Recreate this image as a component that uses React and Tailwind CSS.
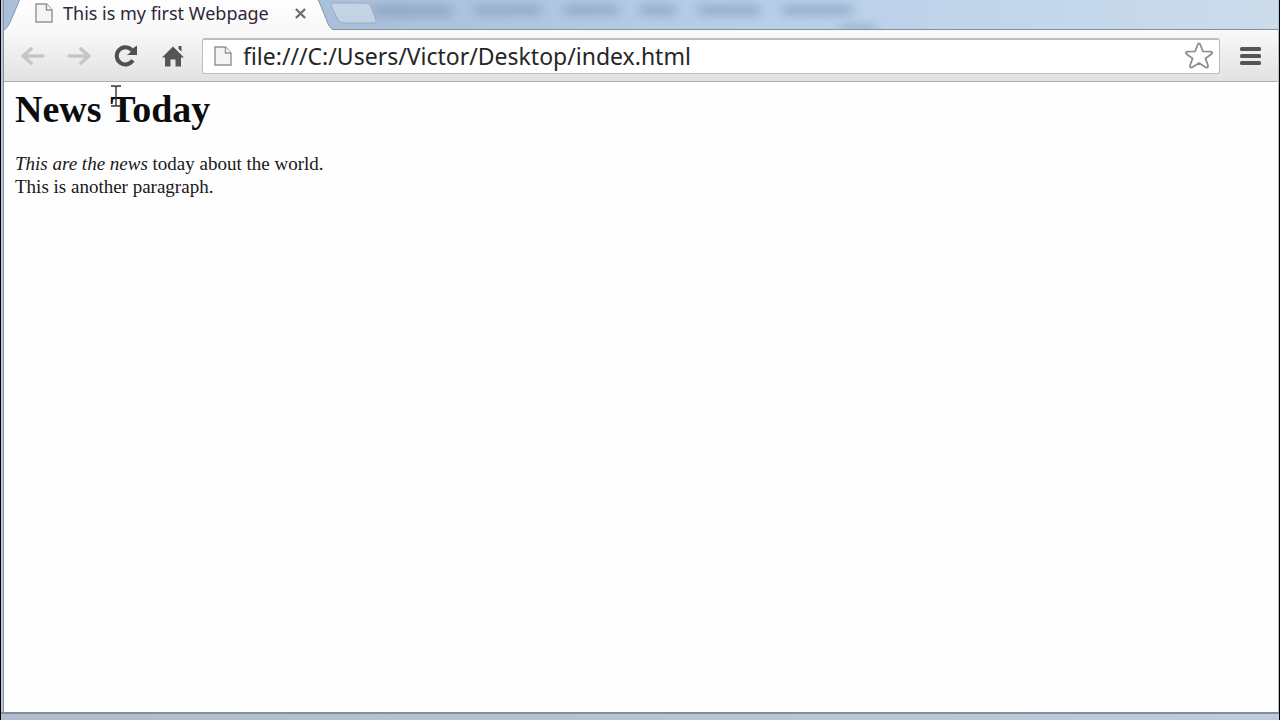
import React from 'react';

const glassSmudges = [
  { x: 368, y: 4, w: 80, h: 14 },
  { x: 470, y: 4, w: 68, h: 12 },
  { x: 560, y: 4, w: 54, h: 12 },
  { x: 636, y: 4, w: 36, h: 12 },
  { x: 694, y: 4, w: 62, h: 12 },
  { x: 778, y: 4, w: 70, h: 12 },
  { x: 836, y: 24, w: 36, h: 8 },
];

const PageIcon = () => (
  <svg width="18" height="20" viewBox="0 0 18 20" className="shrink-0" fill="#f4f4f4" stroke="#929292" strokeWidth="1.4">
    <path d="M1 1H11.5L17 7V19H1Z" />
    <path d="M11.5 1V7H17" fill="#fff" />
  </svg>
);

const ArrowIcon = ({ flip }) => (
  <svg width="26" height="20" viewBox="0 0 26 20" className={flip ? '-scale-x-100' : ''} fill="none" stroke="#c6c6c6" strokeWidth="3.6" strokeLinecap="round" strokeLinejoin="round">
    <path d="M3 10H23M11 3L3 10L11 17" />
  </svg>
);

const ReloadIcon = () => (
  <svg width="26" height="24" viewBox="0 0 26 24">
    <path d="M20.8 16.2A8.6 8.6 0 1 1 19.5 5.8" fill="none" stroke="#505050" strokeWidth="4" />
    <path d="M25 1.5V11H14.5Q19 9 19 5.5Z" fill="#505050" />
  </svg>
);

const HomeIcon = () => (
  <svg width="28" height="24" viewBox="-3 0 28 24" fill="#555">
    <path d="M12 2.5L1 13.5H4V22.5H9.5V15.5H14.5V22.5H20V13.5H23Z" />
    <path d="M17.5 2H20.5V7.5L17.5 5Z" />
  </svg>
);

const StarIcon = () => (
  <svg width="30" height="28" viewBox="0 0 30 28" fill="#fff" stroke="#8f8f8f" strokeWidth="1.8" strokeLinejoin="round">
    <path d="M15 1.5Q16 1.5 16.5 3L18.8 9.3L26.6 9.6Q29.2 10.2 27.5 12L21.4 16.4L24 23.5Q24.2 26 22 25.4L15 21L8 25.4Q5.8 26 6 23.5L8.6 16.4L2.5 12Q.8 10.2 3.4 9.6L11.2 9.3L13.5 3Q14 1.5 15 1.5Z" />
  </svg>
);

const MenuIcon = () => (
  <svg width="22" height="20" viewBox="0 0 22 20" fill="#555">
    <rect x="0" y="1" width="21" height="4" rx="1.5" />
    <rect x="0" y="8" width="21" height="4" rx="1.5" />
    <rect x="0" y="15" width="21" height="4" rx="1.5" />
  </svg>
);

const TabStrip = () => (
  <header className="relative flex h-[30px] overflow-hidden bg-linear-to-r from-[#aabfd9] from-25% via-[#b8cfea] via-60% to-[#cddceb]">
    {/* window glass with whatever shows through it */}
    <svg className="absolute inset-0 h-full w-full" aria-hidden="true">
      <defs>
        <filter id="glass" x="-20%" y="-100%" width="140%" height="300%">
          <feGaussianBlur stdDeviation="6 4" />
        </filter>
        <linearGradient id="tab" x1="0" y1="0" x2="0" y2="1">
          <stop offset="0" stopColor="#fefefe" />
          <stop offset="1" stopColor="#f8f8f8" />
        </linearGradient>
      </defs>
      {glassSmudges.map((s) => (
        <rect key={s.x} x={s.x} y={s.y} width={s.w} height={s.h} fill="#869dbf" opacity="0.6" filter="url(#glass)" />
      ))}
      <line x1="328" y1="29.5" x2="100%" y2="29.5" stroke="#84909f" />
      <path d="M-1 31C3 28 5 25 7 20L16 -1H314L323 21C325 27 328 30 332 31Z" fill="url(#tab)" stroke="#8494ab" />
      <path d="M328 3H362Q366 3 367 6L372 20Q373 23 370 23H340Q336 23 334 20L327 6Z" fill="#c3d2e4" stroke="#98aac2" />
    </svg>
    <div className="relative flex h-[26px] w-[326px] items-center pl-[31px]">
      <PageIcon />
      <span className="ml-[10px] grow whitespace-nowrap text-[18px] leading-6 text-[#302638]">This is my first Webpage</span>
      <button type="button" aria-label="Close tab" className="mr-5 p-1">
        <svg width="11" height="11" viewBox="0 0 12 12" stroke="#6b6b6b" strokeWidth="2.4">
          <path d="M1 1L11 11M11 1L1 11" />
        </svg>
      </button>
    </div>
    <button type="button" aria-label="New tab" className="relative h-6 w-12" />
  </header>
);

const Toolbar = () => (
  <nav className="flex h-[52px] items-center border-b border-[#aeaeae] bg-linear-to-b from-[#f9f9f9] to-[#e2e2e2] px-4">
    <div className="flex items-center gap-5">
      <button type="button" aria-label="Back"><ArrowIcon /></button>
      <button type="button" aria-label="Forward"><ArrowIcon flip /></button>
      <button type="button" aria-label="Reload"><ReloadIcon /></button>
      <button type="button" aria-label="Home"><HomeIcon /></button>
    </div>
    <div className="mr-5 ml-4 flex h-9 grow items-center rounded-[3px] border border-t-2 border-[#bdbdbd] bg-white pr-[5px] pl-[11px]">
      <PageIcon />
      <input
        type="text"
        aria-label="Address"
        defaultValue="file:///C:/Users/Victor/Desktop/index.html"
        className="ml-[11px] h-8 min-w-0 grow bg-transparent text-[23px] text-[#262626] outline-none"
      />
      <button type="button" aria-label="Bookmark this page"><StarIcon /></button>
    </div>
    <button type="button" aria-label="Menu"><MenuIcon /></button>
  </nav>
);

const WebPage = () => (
  <main className="relative grow bg-[#fefefe] px-[11px] pt-1 font-['Liberation_Serif',serif] text-[#181818]">
    <h1 className="text-[38px] leading-[46px] font-bold text-[#0c0c0c]">News Today</h1>
    <div className="mt-5 text-[19px] leading-[23px]">
      <p><em>This are the news</em> today about the world.</p>
      <p>This is another paragraph.</p>
    </div>
    {/* text cursor */}
    <svg className="absolute top-[2px] left-[106px]" width="12" height="24" viewBox="0 0 12 24" fill="none" stroke="#333" strokeWidth="1.4">
      <path d="M1 2H5L6 3L7 2H11M6 3V21M1 22H5L6 21L7 22H11" />
    </svg>
  </main>
);

export default function App() {
  return (
    <div className="flex min-h-screen flex-col border-r border-l border-black bg-[#b9c6d6] font-['Noto_Sans','Open_Sans',sans-serif]">
      <div className="flex grow flex-col pl-[2px]">
        <div className="flex grow flex-col border-r border-l border-r-[#b9c3d0] border-l-[#8290a6]">
          <TabStrip />
          <Toolbar />
          <WebPage />
        </div>
      </div>
      <footer className="h-2 border-t-2 border-[#848d99] bg-linear-to-r from-[#b0bccb] to-[#bdcbdc]" />
    </div>
  );
}
